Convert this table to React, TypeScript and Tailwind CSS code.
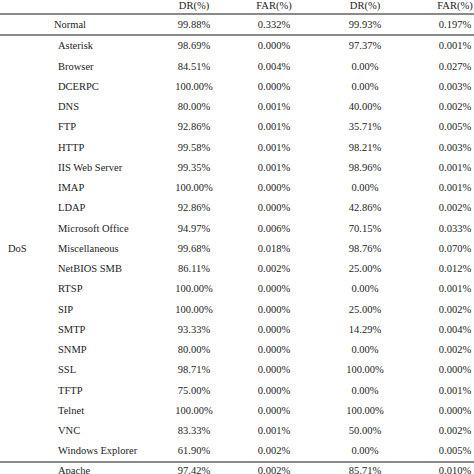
import React from "react";

type Row = [string, string, string, string, string];

const dos: Row[] = [
  ["Asterisk", "98.69%", "0.000%", "97.37%", "0.001%"],
  ["Browser", "84.51%", "0.004%", "0.00%", "0.027%"],
  ["DCERPC", "100.00%", "0.000%", "0.00%", "0.003%"],
  ["DNS", "80.00%", "0.001%", "40.00%", "0.002%"],
  ["FTP", "92.86%", "0.001%", "35.71%", "0.005%"],
  ["HTTP", "99.58%", "0.001%", "98.21%", "0.003%"],
  ["IIS Web Server", "99.35%", "0.001%", "98.96%", "0.001%"],
  ["IMAP", "100.00%", "0.000%", "0.00%", "0.001%"],
  ["LDAP", "92.86%", "0.000%", "42.86%", "0.002%"],
  ["Microsoft Office", "94.97%", "0.006%", "70.15%", "0.033%"],
  ["Miscellaneous", "99.68%", "0.018%", "98.76%", "0.070%"],
  ["NetBIOS SMB", "86.11%", "0.002%", "25.00%", "0.012%"],
  ["RTSP", "100.00%", "0.000%", "0.00%", "0.001%"],
  ["SIP", "100.00%", "0.000%", "25.00%", "0.002%"],
  ["SMTP", "93.33%", "0.000%", "14.29%", "0.004%"],
  ["SNMP", "80.00%", "0.000%", "0.00%", "0.002%"],
  ["SSL", "98.71%", "0.000%", "100.00%", "0.000%"],
  ["TFTP", "75.00%", "0.000%", "0.00%", "0.001%"],
  ["Telnet", "100.00%", "0.000%", "100.00%", "0.000%"],
  ["VNC", "83.33%", "0.001%", "50.00%", "0.002%"],
  ["Windows Explorer", "61.90%", "0.002%", "0.00%", "0.005%"],
];

function Values({ v }: { v: string[] }) {
  return (
    <>
      <div className="w-[108px] shrink-0 text-center">{v[0]}</div>
      <div className="w-[52px] shrink-0 text-center">{v[1]}</div>
      <div className="w-[130px] shrink-0 text-center">{v[2]}</div>
      <div className="w-[50px] shrink-0 text-center">{v[3]}</div>
    </>
  );
}

function BodyRow({ r, h = "h-[20.25px]" }: { r: Row; h?: string }) {
  return (
    <div className={`flex items-center ${h}`}>
      <div className="w-[86px] shrink-0 whitespace-nowrap pl-1">{r[0]}</div>
      <Values v={r.slice(1)} />
    </div>
  );
}

function Line() {
  return <div className="h-[2px] w-full bg-[#8a8a8a]" />;
}

export default function App() {
  return (
    <div
      className="h-[474px] w-[474px] overflow-hidden bg-white text-[10.5px] text-[#242424]"
      style={{ fontFamily: '"Liberation Serif", "Times New Roman", serif' }}
    >
      <div className="w-[480px]">
        <div className="flex h-[13px] items-center leading-none">
          <div className="w-[140px] shrink-0" />
          <Values v={["DR(%)", "FAR(%)", "DR(%)", "FAR(%)"]} />
        </div>
        <Line />
        <div className="flex h-[19px] items-center">
          <div className="w-[140px] shrink-0 text-center">Normal</div>
          <Values v={["99.88%", "0.332%", "99.93%", "0.197%"]} />
        </div>
        <Line />
        <div className="flex">
          <div className="flex w-[54px] shrink-0 items-center pl-2">DoS</div>
          <div className="flex flex-col">
            {dos.map((r) => (
              <BodyRow key={r[0]} r={r} />
            ))}
          </div>
        </div>
        <Line />
        <div className="flex h-[16px] items-center">
          <div className="w-[54px] shrink-0" />
          <BodyRow r={["Apache", "97.42%", "0.002%", "85.71%", "0.010%"]} h="h-[16px]" />
        </div>
      </div>
    </div>
  );
}
